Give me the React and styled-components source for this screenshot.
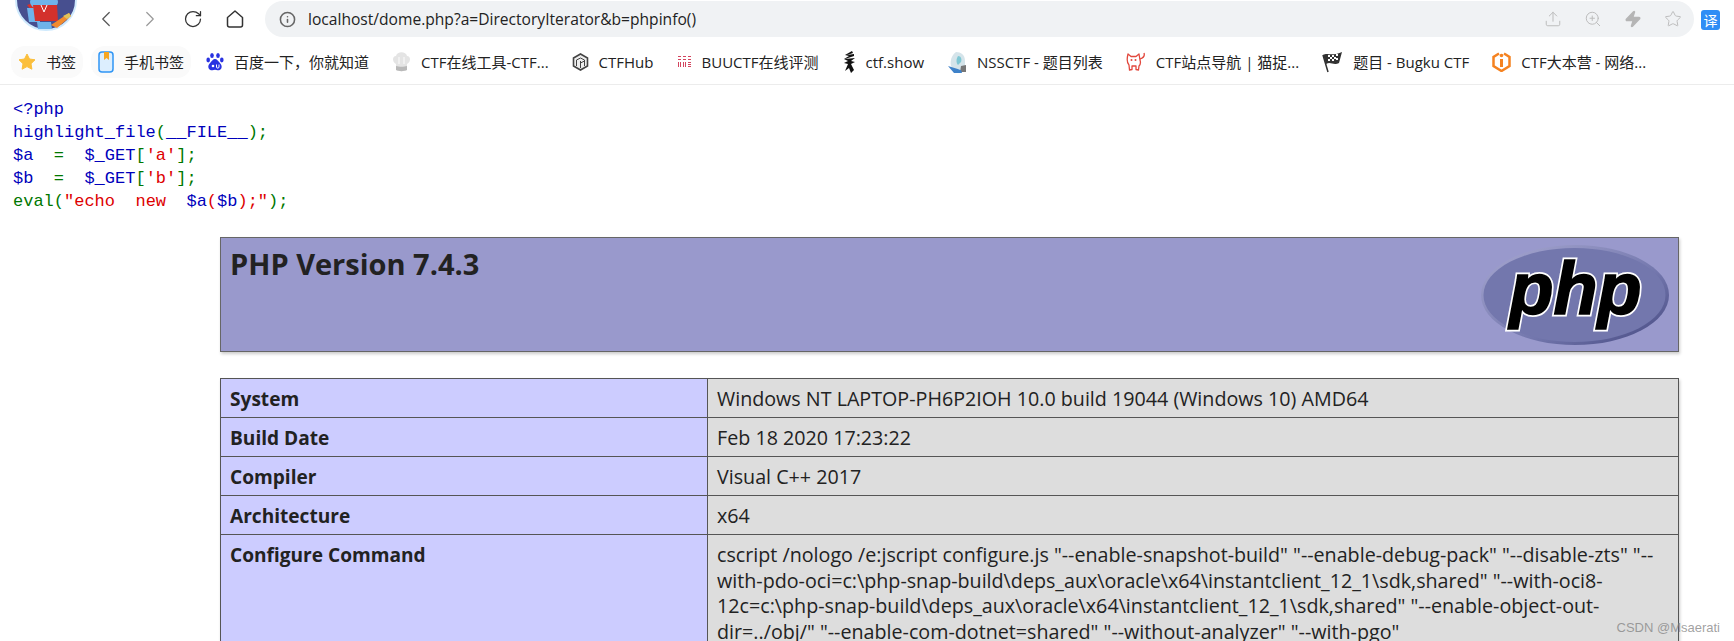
import React from 'react';
import styled, { createGlobalStyle } from 'styled-components';
import { ChevronLeft, ChevronRight, RotateCw, Info, Upload, ZoomIn, Zap, Star } from 'lucide-react';

const UI_FONT = `"Open Sans", "Noto Sans CJK SC", sans-serif`;

const Global = createGlobalStyle`
	html, body {
		margin: 0;
		padding: 0;
		background: #fff;
		overflow: hidden;
	}
	body {
		font-family: ${UI_FONT};
		color: #222;
	}
`;

const bookmarks = [
	{ label: '书签', icon: 'star', chip: true },
	{ label: '手机书签', icon: 'phone', chip: true },
	{ label: '百度一下，你就知道', icon: 'baidu' },
	{ label: 'CTF在线工具-CTF...', icon: 'chef' },
	{ label: 'CTFHub', icon: 'cube' },
	{ label: 'BUUCTF在线评测', icon: 'buu' },
	{ label: 'ctf.show', icon: 'ink' },
	{ label: 'NSSCTF - 题目列表', icon: 'nss' },
	{ label: 'CTF站点导航 | 猫捉...', icon: 'cat' },
	{ label: '题目 - Bugku CTF', icon: 'flag' },
	{ label: 'CTF大本营 - 网络...', icon: 'hex' },
];

const rows = [
	['System', ['Windows NT LAPTOP-PH6P2IOH 10.0 build 19044 (Windows 10) AMD64']],
	['Build Date', ['Feb 18 2020 17:23:22']],
	['Compiler', ['Visual C++ 2017']],
	['Architecture', ['x64']],
	[
		'Configure Command',
		[
			'cscript /nologo /e:jscript configure.js "--enable-snapshot-build" "--enable-debug-pack" "--disable-zts" "--',
			'with-pdo-oci=c:\\php-snap-build\\deps_aux\\oracle\\x64\\instantclient_12_1\\sdk,shared" "--with-oci8-',
			'12c=c:\\php-snap-build\\deps_aux\\oracle\\x64\\instantclient_12_1\\sdk,shared" "--enable-object-out-',
			'dir=../obj/" "--enable-com-dotnet=shared" "--without-analyzer" "--with-pgo"',
		],
	],
];

function BookmarkIcon({ name }) {
	switch (name) {
		case 'star':
			return (
				<svg width='18' height='18' viewBox='0 0 18 18'>
					<path d='M9 1l2.500 5 5.500.8-4 3.900.9 5.500L9 13.600l-4.900 2.600.9-5.500-4-3.900L6.500 6z' fill='#fbbf3c' stroke='#fbbf3c' strokeLinejoin='round' />
				</svg>
			);
		case 'phone':
			return (
				<svg width='16' height='22' viewBox='0 0 16 22'>
					<rect x='1' y='1' width='14' height='20' rx='3' fill='#dceefe' stroke='#2f95f5' strokeWidth='1.500' />
					<path d='M6 1h5v8l-2.500-2L6 9z' fill='#f5a623' />
				</svg>
			);
		case 'baidu':
			return (
				<svg width='18' height='19' viewBox='0 0 18 19'>
					<g fill='#2932e1'>
						<ellipse cx='6' cy='3.500' rx='1.800' ry='2.500' />
						<ellipse cx='12' cy='3.500' rx='1.800' ry='2.500' />
						<ellipse cx='2.200' cy='8' rx='1.800' ry='2.400' />
						<ellipse cx='15.800' cy='8' rx='1.800' ry='2.400' />
						<path d='M9 7c-2 0-3 2-4.500 3.500C3 12 1.800 13.500 2.500 16c.6 2 3 2.500 4 2.200 1-.2 1.500-.4 2.500-.4s1.500.2 2.500.4c1 .3 3.400-.2 4-2.200.7-2.500-.5-4-2-5.500C12 9 11 7 9 7z' />
					</g>
					<circle cx='7' cy='14' r='1.300' fill='#fff' />
					<path d='M10.500 12.500v2.500c0 1.500 2.500 1.500 2.500 0v-2.500' fill='none' stroke='#fff' />
				</svg>
			);
		case 'chef':
			return (
				<svg width='19' height='21' viewBox='0 0 19 21'>
					<path d='M4 13C0 11 0 5 4 5c1-5 10-5 11 0 4 0 4 6 0 8v6c-3 1.500-8 1.500-11 0z' fill='#e4e4e4' />
					<path d='M4 15c3 1 8 1 11 0v4c-3 1.500-8 1.500-11 0z' fill='#b9b9b9' />
					<path d='M7 6v7M12 6v7' stroke='#f4f4f4' strokeWidth='1.500' />
				</svg>
			);
		case 'cube':
			return (
				<svg width='17' height='18' viewBox='0 0 17 18'>
					<path d='M8.500 1l7 4v8l-7 4-7-4V5z' fill='#eee' stroke='#444' strokeWidth='1.600' />
					<path d='M4.500 7v6M8.500 8v7M12.500 7v6M4.500 7l4-2 4 2M8.500 10l4-2' fill='none' stroke='#444' />
				</svg>
			);
		case 'buu':
			return (
				<svg width='15' height='13' viewBox='0 0 15 13'>
					<g fill='#d3455f'>
						<path d='M1 1h3v1H1zM1 4h3v1H1zM6 1h3v1H6zM6 4h3v1H6zM11 1h3v1h-3zM11 4h3v1h-3z' />
						<path d='M1 7h1v5H1zM3 7h1v5H3zM6 7h1v5H6zM8 7h1v5H8zM11 7h3v1h-3zM11 9h3v1h-3zM11 11h3v1h-3z' />
					</g>
				</svg>
			);
		case 'ink':
			return (
				<svg width='14' height='22' viewBox='0 0 14 22'>
					<path d='M10 0l1 2-6 2 7-1v2L3 8l10-1-4 3 4 1-4 2 3 6-3 3-2-5-4 3 3-7-4-1 4-2-4-2 5-3-4-1z' fill='#111' />
				</svg>
			);
		case 'nss':
			return (
				<svg width='20' height='22' viewBox='0 0 20 22'>
					<path d='M9 1c5 0 9 3 9 9v8H6C2 15 3 5 9 1z' fill='#d5e4ea' />
					<path d='M11 5c3 0 4 3 3 6l-3 3c-2-2-2-6 0-9z' fill='#7fc7d4' />
					<path d='M14 15l5-1v7h-6z' fill='#777' />
					<path d='M1 15l13 4 1 3H7z' fill='#3f82c9' />
				</svg>
			);
		case 'cat':
			return (
				<svg width='20' height='19' viewBox='0 0 20 19'>
					<g fill='#fff' stroke='#e2483d' strokeWidth='1.300' strokeLinejoin='round'>
						<path d='M14 7c3-1 5-3 4-6' fill='none' />
						<path d='M2 2l3 2.500h5L13 2l1 6c1 3 0 5-1 6l-.5 4-2.500-.5V14H6v3.500L3.500 18 3 13C1 11 1 6 2 2z' />
					</g>
					<circle cx='5.500' cy='8' r='1' fill='#e2483d' />
					<circle cx='9.500' cy='8' r='1' fill='#e2483d' />
				</svg>
			);
		case 'flag':
			return (
				<svg width='21' height='23' viewBox='0 0 21 23'>
					<path d='M6 22L1 5' stroke='#333' strokeWidth='1.500' />
					<path d='M1 5c5-3 7 2 19-3l-3 11c-6 3-8-2-13 1z' fill='#333' />
					<path d='M6 5h2v2H6zM10 5h2v2h-2zM14 4h2v2h-2zM8 7h2v2H8zM12 7h2v2h-2zM6 9h2v2H6zM10 9h2v2h-2zM14 8h2v2h-2z' fill='#fff' />
				</svg>
			);
		case 'hex':
			return (
				<svg width='19' height='21' viewBox='0 0 19 21'>
					<path d='M7 2.500L1.500 6v9L9.500 20l8-5V6L12 2.500' fill='none' stroke='#f58220' strokeWidth='2.500' />
					<path d='M9.500 8v8' stroke='#f58220' strokeWidth='3' />
					<circle cx='9.500' cy='4.500' r='1.800' fill='#f58220' />
				</svg>
			);
		default:
			return null;
	}
}

function PhpLogo() {
	const word = {
		x: 95,
		y: 69,
		textAnchor: 'middle',
		fontFamily: '"Liberation Sans", sans-serif',
		fontWeight: 700,
		fontStyle: 'italic',
		fontSize: 74,
		textLength: 132,
		lengthAdjust: 'spacingAndGlyphs',
	};
	return (
		<LogoSvg viewBox='0 0 189 100'>
			<defs>
				<linearGradient id='rim' x1='0' y1='0' x2='1' y2='1'>
					<stop offset='0' stopColor='#a9a9d2' />
					<stop offset='0.6' stopColor='#7377ad' />
					<stop offset='1' stopColor='#44477f' />
				</linearGradient>
			</defs>
			<ellipse cx='94.500' cy='50' rx='94' ry='50' fill='url(#rim)' />
			<ellipse cx='94' cy='50' rx='91' ry='47' fill='#7377ad' />
			<text {...word} fill='#fff' stroke='#fff' strokeWidth='5'>php</text>
			<text {...word} fill='#000' stroke='#000' strokeWidth='1.600'>php</text>
		</LogoSvg>
	);
}

export default function App() {
	return (
		<Page>
			<Global />
			<Toolbar>
				<Avatar>
					<svg width='62' height='62' viewBox='0 0 62 62'>
						<circle cx='31' cy='31' r='30' fill='#474f8f' stroke='#cfeafd' strokeWidth='2' />
						<path d='M12 36l6-2 3 4-5 3z' fill='#d3312c' />
						<path d='M12 39h11l2 14H14z' fill='#6fb3ea' />
						<ellipse cx='29' cy='33' rx='14' ry='8' fill='#6fb3ea' />
						<path d='M18 36h24l1 16H20z' fill='#d3312c' />
						<path d='M26 36l3 7 3-7' fill='none' stroke='#fff' />
						<path d='M22 53h14l1 7H23z' fill='#6fb3ea' />
						<path d='M36 56l18-12 2 3-14 12z' fill='#f28b2e' />
						<path d='M48 47l6-3 2 3-4 3z' fill='#e2c35a' />
					</svg>
				</Avatar>
				<NavIcon $left={93}><ChevronLeft size={26} strokeWidth={1.100} color='#555' /></NavIcon>
				<NavIcon $left={18}><ChevronRight size={26} strokeWidth={1.100} color='#999' /></NavIcon>
				<NavIcon $left={20}><RotateCw size={20} strokeWidth={1.500} color='#333' /></NavIcon>
				<NavIcon $left={22}>
					<svg width='20' height='20' viewBox='0 0 20 20'>
						<path d='M2.500 8.500L10 2l7.500 6.500V16a2 2 0 0 1-2 2h-11a2 2 0 0 1-2-2z' fill='none' stroke='#333' strokeWidth='1.500' strokeLinejoin='round' />
					</svg>
				</NavIcon>
				<AddressBar>
					<Info size={17} strokeWidth={2.200} color='#666' />
					<Url>localhost/dome.php?a=DirectoryIterator&amp;b=phpinfo()</Url>
					<AddressActions>
						<Upload size={18} strokeWidth={1.300} color='#bbb' />
						<ZoomIn size={18} strokeWidth={1.300} color='#bbb' />
						<Zap size={18} fill='#b5b5b5' stroke='#b5b5b5' />
						<Star size={18} strokeWidth={1.300} color='#bbb' />
					</AddressActions>
				</AddressBar>
				<TranslateBadge>译</TranslateBadge>
			</Toolbar>

			<BookmarkBar>
				{bookmarks.map((b) => (
					<Bookmark key={b.label} $chip={b.chip}>
						<BookmarkIcon name={b.icon} />
						<span>{b.label}</span>
					</Bookmark>
				))}
			</BookmarkBar>

			<Code>
				<CodeLine><Kw>&lt;?php</Kw></CodeLine>
				<CodeLine><Kw>highlight_file</Kw><Op>(</Op><Kw>__FILE__</Kw><Op>);</Op></CodeLine>
				<CodeLine><Kw>$a&nbsp;&nbsp;</Kw><Op>=&nbsp;&nbsp;</Op><Kw>$_GET</Kw><Op>[</Op><Str>'a'</Str><Op>];</Op></CodeLine>
				<CodeLine><Kw>$b&nbsp;&nbsp;</Kw><Op>=&nbsp;&nbsp;</Op><Kw>$_GET</Kw><Op>[</Op><Str>'b'</Str><Op>];</Op></CodeLine>
				<CodeLine><Op>eval(</Op><Str>"echo&nbsp;&nbsp;new&nbsp;&nbsp;</Str><Kw>$a</Kw><Str>(</Str><Kw>$b</Kw><Str>);"</Str><Op>);</Op></CodeLine>
			</Code>

			<InfoBlock>
				<Header>
					<Title>PHP Version 7.4.3</Title>
					<PhpLogo />
				</Header>
				<InfoTable>
					<tbody>
						{rows.map(([label, lines]) => (
							<tr key={label}>
								<LabelCell>{label}</LabelCell>
								<ValueCell>
									{lines.map((l) => (
										<ValueLine key={l}>{l}</ValueLine>
									))}
								</ValueCell>
							</tr>
						))}
					</tbody>
				</InfoTable>
			</InfoBlock>

			<Watermark>CSDN @Msaerati</Watermark>
		</Page>
	);
}

const Page = styled.div`
	position: relative;
	width: 1734px;
	height: 641px;
	overflow: hidden;
	background: #fff;
`;

const Toolbar = styled.div`
	position: relative;
	display: flex;
	align-items: center;
	height: 42px;
	box-sizing: border-box;
`;

const Avatar = styled.div`
	position: absolute;
	left: 15px;
	top: -31px;
	width: 62px;
	height: 62px;
`;

const NavIcon = styled.span`
	display: inline-flex;
	margin-left: ${(p) => p.$left}px;
	margin-top: -4px;
	flex: none;
`;

const AddressBar = styled.div`
	display: flex;
	align-items: center;
	flex: 1;
	margin-left: 20px;
	height: 36px;
	margin-top: -4px;
	padding: 0 12px 0 14px;
	background: #f0f2f4;
	border-radius: 18px;
`;

const Url = styled.span`
	margin-left: 12px;
	font-size: 15.6px;
	color: #222;
`;

const AddressActions = styled.div`
	display: flex;
	align-items: center;
	gap: 22px;
	margin-left: auto;
`;

const TranslateBadge = styled.span`
	display: inline-flex;
	align-items: center;
	justify-content: center;
	width: 19px;
	height: 20px;
	margin: -2px 14px 0 7px;
	background: #2f8df5;
	color: #fff;
	border-radius: 3px;
	font-size: 14px;
	font-family: "Noto Sans CJK SC", sans-serif;
`;

const BookmarkBar = styled.div`
	display: flex;
	align-items: center;
	height: 43px;
	padding: 0 0 3px 11px;
	box-sizing: border-box;
	border-bottom: 1px solid #ececec;
`;

const Bookmark = styled.span`
	display: inline-flex;
	align-items: center;
	gap: 10px;
	height: 32px;
	padding: 0 7px;
	margin-right: ${(p) => (p.$chip ? 8 : 9)}px;
	border-radius: 14px;
	background: ${(p) => (p.$chip ? '#fafafa' : 'transparent')};
	font-size: 15px;
	color: #222;
	white-space: nowrap;
	flex: none;
`;

const Code = styled.code`
	display: block;
	padding: 13px 0 0 13px;
	font-family: "Liberation Mono", "Noto Sans CJK SC", monospace;
	font-size: 17px;
	line-height: 23px;
`;

const CodeLine = styled.div`
	white-space: pre;
	color: #000;
`;

const Kw = styled.span`
	color: #0000bb;
`;

const Op = styled.span`
	color: #007700;
`;

const Str = styled.span`
	color: #dd0000;
`;

const InfoBlock = styled.section`
	width: 1459px;
	margin: 24px 0 0 220px;
`;

const Header = styled.div`
	display: flex;
	justify-content: space-between;
	height: 115px;
	box-sizing: border-box;
	padding: 6px 8px 0 9px;
	background: #9999cc;
	border: 1px solid #666;
	box-shadow: 1px 2px 3px #ccc;
`;

const Title = styled.h1`
	margin: 0;
	font-size: 29px;
	line-height: 40px;
	font-weight: 700;
	color: #222;
`;

const LogoSvg = styled.svg`
	width: 190px;
	height: 100px;
	margin-top: 1px;
	flex: none;
`;

const InfoTable = styled.table`
	width: 100%;
	margin-top: 26px;
	border-collapse: collapse;
	table-layout: fixed;
	box-shadow: 1px 2px 3px #ccc;
`;

const LabelCell = styled.td`
	width: 487px;
	box-sizing: border-box;
	padding: 7px 9px 5px;
	border: 1px solid #555;
	background: #ccccff;
	color: #222;
	font-size: 19.1px;
	font-weight: 700;
	vertical-align: top;
	line-height: 26px;
	height: 39px;
`;

const ValueCell = styled.td`
	padding: 7px 9px 5px;
	border: 1px solid #555;
	background: #dddddd;
	color: #222;
	font-size: 19.7px;
	vertical-align: top;
	line-height: 25.5px;
`;

const ValueLine = styled.div`
	white-space: nowrap;
`;

const Watermark = styled.span`
	position: absolute;
	right: 14px;
	bottom: 6px;
	font-size: 13px;
	color: rgba(130, 130, 130, 0.75);
	font-family: "Liberation Sans", sans-serif;
`;
